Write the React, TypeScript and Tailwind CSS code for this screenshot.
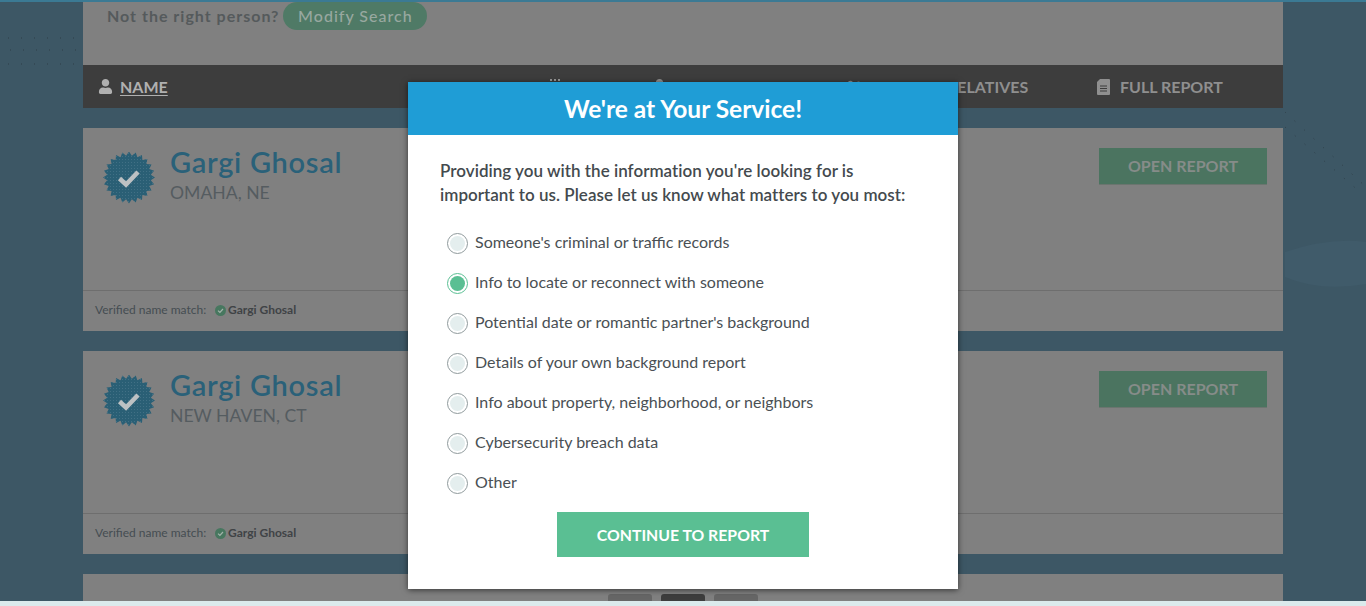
import { FaUser, FaUserFriends } from "react-icons/fa"

const options = [
  "Someone's criminal or traffic records",
  "Info to locate or reconnect with someone",
  "Potential date or romantic partner's background",
  "Details of your own background report",
  "Info about property, neighborhood, or neighbors",
  "Cybersecurity breach data",
  "Other",
]

const people = [
  { name: "Gargi Ghosal", place: "OMAHA, NE" },
  { name: "Gargi Ghosal", place: "NEW HAVEN, CT" },
]

function burstPoints(cx: number, cy: number, outer: number, inner: number, count: number) {
  const pts: string[] = []
  for (let i = 0; i < count * 2; i++) {
    const r = i % 2 === 0 ? outer : inner
    const a = (Math.PI * i) / count - Math.PI / 2
    pts.push(`${(cx + r * Math.cos(a)).toFixed(2)},${(cy + r * Math.sin(a)).toFixed(2)}`)
  }
  return pts.join(" ")
}

function Badge() {
  return (
    <svg width="52" height="52" viewBox="0 0 52 52" className="shrink-0">
      <defs>
        <pattern id="badge-dots" width="3" height="3" patternUnits="userSpaceOnUse">
          <rect width="3" height="3" fill="#2a5f75" />
          <rect x="1" y="1" width="1" height="1" fill="#417085" />
        </pattern>
      </defs>
      <polygon points={burstPoints(26, 25.5, 26, 22, 24)} fill="url(#badge-dots)" />
      <path d="M16.5 26.5 L23 32.5 L35 20" fill="none" stroke="#bcc1c3" strokeWidth="4.6" />
    </svg>
  )
}

function SmallCheck() {
  return (
    <svg width="11" height="11" viewBox="0 0 11 11" className="shrink-0">
      <circle cx="5.5" cy="5.5" r="5.5" fill="#47775f" />
      <path d="M3 5.6 L4.9 7.4 L8 4" fill="none" stroke="#a3b3ab" strokeWidth="1.2" />
    </svg>
  )
}

function CalendarTop() {
  return (
    <svg width="14" height="16" viewBox="0 0 14 16" fill="#999999">
      <rect x="1" y="0" width="2" height="2" />
      <rect x="5" y="0" width="2" height="2" />
      <rect x="9" y="0" width="2" height="2" />
      <rect x="0" y="3" width="14" height="13" rx="1" />
    </svg>
  )
}

function ReportIcon() {
  return (
    <svg width="13" height="16" viewBox="0 0 13 16">
      <path d="M3 0 H12 Q13 0 13 1 V15 Q13 16 12 16 H1 Q0 16 0 15 V3 Z" fill="#8f8f8f" />
      <path d="M3 7 H10 M3 9.5 H10 M3 12 H10" stroke="#3d3d3d" strokeWidth="1.2" />
    </svg>
  )
}

function ResultCard({ name, place }: { name: string; place: string }) {
  return (
    <div className="h-[203px] bg-[#808080] flex flex-col">
      <div className="flex-1 flex justify-between pl-5 pr-4 pt-5">
        <div className="flex gap-[15px]">
          <div className="pt-[4px]">
            <Badge />
          </div>
          <div className="mt-[-3px]">
            <div className="text-[29px] leading-[34px] font-semibold tracking-[0.7px] text-[#2a6179]">{name}</div>
            <div className="mt-[2px] text-[17.6px] leading-[24px] text-[#555c60]">{place}</div>
          </div>
        </div>
        <div className="w-[168px] h-[37px] bg-[#4b7460] border-b border-[#6b756f] flex items-center justify-center text-[16px] font-bold text-[#868c89]">
          OPEN REPORT
        </div>
      </div>
      <div className="h-[41px] border-t border-[#6e6e6e] pl-3 pb-[2px] flex items-center text-[12px] text-[#454d52]">
        <span className="w-[120px]">Verified name match:</span>
        <SmallCheck />
        <span className="ml-[2px] font-bold text-[#3f4346]">{name}</span>
      </div>
    </div>
  )
}

export default function App() {
  return (
    <div className="h-[606px] overflow-hidden bg-[#dbeaec] font-['Lato',sans-serif]">
      <div className="relative h-[601px] overflow-hidden bg-[#3d5765] border-t-2 border-[#3b7a94]">
        <svg className="absolute left-0 top-0" width="1366" height="601" fill="none">
          <path d="M1285 250 Q1330 235 1366 240 V282 Q1320 290 1285 275 Z" fill="#405b6a" />
          <path d="M8 36 H80 M10 48 H80 M8 62 H80" stroke="#2f3f49" strokeDasharray="1 12" />
          <path d="M1150 58 H1270" stroke="#2f3f49" strokeDasharray="1 12" />
          <path d="M1285 110 L1366 185 M1285 125 L1360 190" stroke="#2f3f49" strokeDasharray="1 12" />
        </svg>

        <div className="relative w-[1200px] ml-[83px]">
          <div className="h-[63px] bg-[#808080] pl-6">
            <div className="flex items-center h-[28px] gap-[4px]">
              <span className="text-[16px] font-bold tracking-[1px] text-[#555a5c]">Not the right person?</span>
              <span className="w-[144px] h-[28px] rounded-full bg-[#4f7a66] flex items-center justify-center text-[16px] font-medium tracking-[1px] text-[#98a8a0]">
                Modify Search
              </span>
            </div>
          </div>

          <div className="h-[43px] bg-[#3d3d3d] flex items-center text-[16px] font-bold text-[#8f8f8f]">
            <div className="w-[466px] pl-[15px] flex items-center gap-[7px] text-[#b0b0b0]">
              <FaUser size={15} />
              <span className="underline underline-offset-2">NAME</span>
            </div>
            <div className="w-[103px]">
              <CalendarTop />
            </div>
            <div className="w-[193px]">
              <FaUser size={15} />
            </div>
            <div className="w-[252px] flex items-center gap-[7px]">
              <FaUserFriends size={18} />
              <span>POSSIBLE RELATIVES</span>
            </div>
            <div className="flex items-center gap-[10px]">
              <ReportIcon />
              <span>FULL REPORT</span>
            </div>
          </div>

          <div className="flex flex-col gap-5 mt-5">
            {people.map((p) => (
              <ResultCard key={p.place} name={p.name} place={p.place} />
            ))}
            <div className="h-[60px] bg-[#808080]" />
          </div>
        </div>

        <div className="absolute bottom-0 left-[608px] flex gap-[9px]">
          <div className="w-[44px] h-[7px] rounded-t-[3px] bg-[#666666]" />
          <div className="w-[44px] h-[7px] rounded-t-[3px] bg-[#3d3d3d]" />
          <div className="w-[44px] h-[7px] rounded-t-[3px] bg-[#666666]" />
        </div>

        <div className="absolute left-[408px] top-[80px] w-[550px] h-[507px] bg-white shadow-[0_1px_6px_rgba(0,0,0,0.6)]">
          <div className="h-[53px] pt-[1px] bg-[#1f9dd6] flex items-center justify-center text-[24.5px] font-bold text-white">
            We're at Your Service!
          </div>
          <div className="px-[32px] pt-[24px]">
            <p className="text-[17px] leading-[24px] font-semibold tracking-[0.03px] text-[#444a4e]">
              Providing you with the information you're looking for is
              <br />
              important to us. Please let us know what matters to you most:
            </p>
            <div className="mt-[16px] flex flex-col">
              {options.map((o, i) => (
                <div key={o} className="h-[40px] flex items-center gap-[7px] pl-[7px] text-[16px] text-[#4a5054]">
                  <span
                    className={
                      i === 1
                        ? "w-[21px] h-[21px] rounded-full border border-[#5abf93] flex items-center justify-center"
                        : "w-[21px] h-[21px] rounded-full border border-[#8f9a9c] flex items-center justify-center"
                    }
                  >
                    <span className={i === 1 ? "w-[15px] h-[15px] rounded-full bg-[#5abf93]" : "w-[15px] h-[15px] rounded-full bg-[#e4eeee]"} />
                  </span>
                  <span className="mb-[2px]">{o}</span>
                </div>
              ))}
            </div>
            <div className="flex justify-center mt-[9px]">
              <div className="w-[252px] h-[45px] bg-[#5abf93] flex items-center justify-center text-[15.8px] font-bold text-white">
                CONTINUE TO REPORT
              </div>
            </div>
          </div>
        </div>
      </div>
    </div>
  )
}
